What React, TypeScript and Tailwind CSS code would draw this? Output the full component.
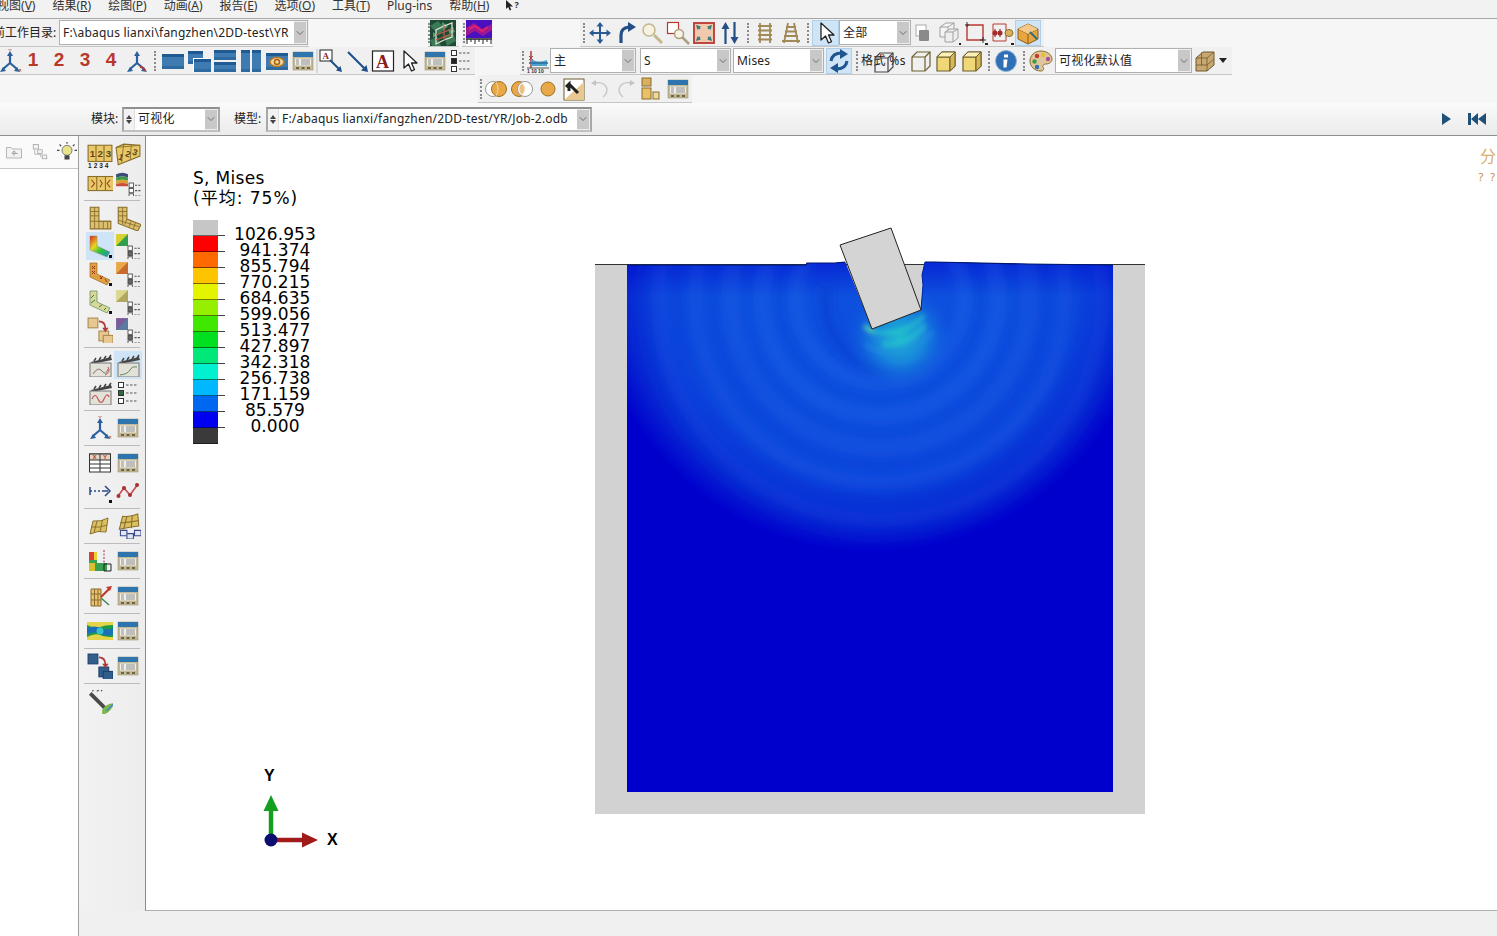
import type { ReactNode } from "react";
import { ChevronDown } from "lucide-react";

const ui = "font-['Noto_Sans','Noto_Sans_CJK_SC',sans-serif]";

function Ico({ children, size = 24 }: { children: ReactNode; size?: number }) {
  return (
    <svg className="shrink-0" width={size} height={size} viewBox="0 0 24 24" fill="none">
      {children}
    </svg>
  );
}

const Y = "#e8c868"; // yellow mesh fill
const YL = "#8a6d2a"; // yellow mesh line

/* ---------- top toolbar icons ---------- */
const TriadAxes = ({ small = false }: { small?: boolean }) => (
  <Ico>
    <path d="M12 5v9M12 14l-7 6M12 14l7 6" stroke="#2b5f9e" strokeWidth="2.200" />
    <path d="M12 2l-3 5h6zM2 23l6-1-3-4zM22 23l-6-1 3-4z" fill="#2b5f9e" />
    {!small && <path d="M10.500 0l1.500 1.500L13.500 0M21 20l2 2.500M23 20l-2 2.500" stroke="#b04a3a" strokeWidth=".8" />}
    {small && <path d="M15 18q4 0 5 4" stroke="#b03a3a" strokeWidth="1.800" />}
  </Ico>
);
const Win = ({ x, y, w, h }: { x: number; y: number; w: number; h: number }) => (
  <g>
    <rect x={x} y={y} width={w} height={h} fill="#3d7bb0" />
    <rect x={x} y={y} width={w} height={Math.min(3, h / 3)} fill="#1f5a92" />
    <rect x={x} y={y + h - 3} width={w} height={3} fill="#2c6aa0" />
  </g>
);
const OneWin = () => <Ico><Win x={1} y={5} w={22} h={15} /></Ico>;
const CascadeWin = () => (
  <Ico>
    <Win x={1} y={2} w={15} h={13} />
    <rect x={6} y={9} width={18} height={14} fill="#fff" />
    <Win x={7} y={10} w={17} h={13} />
  </Ico>
);
const RowsWin = () => <Ico><Win x={1} y={1} w={22} h={10} /><Win x={1} y={13} w={22} h={10} /></Ico>;
const ColsWin = () => <Ico><Win x={2} y={1} w={9} h={22} /><Win x={13} y={1} w={9} h={22} /></Ico>;
const LinkWin = () => (
  <Ico>
    <Win x={1} y={4} w={22} h={17} />
    <ellipse cx="12" cy="13" rx="7" ry="4.500" fill="#f0d8a0" stroke="#c07820" strokeWidth="1.500" />
    <circle cx="12" cy="13" r="2.500" stroke="#a86010" strokeWidth="1.500" />
  </Ico>
);
const Manager = () => (
  <Ico>
    <rect x="2" y="3" width="20" height="18" fill="#c4ba98" stroke="#8f8562" strokeWidth=".5" />
    <rect x="2" y="3" width="20" height="5" fill="#2e74ad" />
    <rect x="4" y="9.500" width="16" height="7" fill="#eeeeea" />
    <path d="M5 11h3M5 13h3M5 15h3M10 11h9M10 13h9M10 15h9" stroke="#8f8f8f" strokeWidth="1" />
    <path d="M5 18h3v2H5zM10.500 18h3v2h-3zM16 18h3v2h-3z" fill="#6e6545" />
  </Ico>
);
const NoteArrow = () => (
  <Ico>
    <rect x="1" y="1" width="12" height="11" fill="#fff" stroke="#222" />
    <text x="3.500" y="10" fontSize="9" fontWeight="700" fontFamily="Liberation Serif" fill="#8a1c1c">A</text>
    <path d="M11 11l9 9" stroke="#1f4f88" strokeWidth="2" />
    <path d="M23 23l-6-1.500 4.500-4.500z" fill="#1f4f88" />
  </Ico>
);
const Arrow = () => (
  <Ico>
    <path d="M3 3l16 16" stroke="#1f4f88" strokeWidth="2.200" />
    <path d="M23 23l-7-1.500 5.500-5.500z" fill="#1f4f88" />
  </Ico>
);
const AText = () => (
  <Ico>
    <rect x="1.500" y="2" width="21" height="20" fill="#fff" stroke="#222" strokeWidth="1.200" />
    <text x="5" y="19" fontSize="18" fontWeight="700" fontFamily="Liberation Serif" fill="#8a1c1c">A</text>
  </Ico>
);
const Cursor = () => (
  <Ico>
    <path d="M7 2v17l4.500-4 3 7 3-1.300-3-6.700H20z" fill="#fff" stroke="#222" strokeWidth="1.300" strokeLinejoin="round" />
  </Ico>
);
const CheckList = ({ swatch = "#222", small = false }: { swatch?: string; small?: boolean }) => (
  <Ico size={small ? 18 : 24}>
    {[4, 12, 20].map((y, i) => (
      <g key={y}>
        <rect x="2.500" y={y - 2.500} width="5" height="5" fill={i === 1 ? swatch : "#fff"} stroke="#333" />
        <path d={`M10 ${y}h12`} stroke="#555" strokeWidth="1.200" strokeDasharray="2.500 1.500" />
      </g>
    ))}
  </Ico>
);
const Mosaic = () => (
  <svg className="shrink-0" width="26" height="26" viewBox="0 0 26 26">
    <rect width="26" height="26" fill="#1c4a34" />
    <path d="M0 6l8-5 7 7-6 7zM14 16l9-4 3 9-9 5zM0 20l7-3 4 9H2z" fill="#3a7a54" />
    <path d="M12 2l6 4-5 5zM18 10l5-3 2 5-5 2zM3 12l4 3-4 3z" fill="#5a9a70" />
    <path d="M6 24V10l8-4 8-3v14l-8 3z" fill="none" stroke="#e4e0d8" strokeWidth="1.300" />
    <path d="M14 6v14M6 15l16-6M6 20l16-6" stroke="#c05a48" strokeWidth="1.200" />
  </svg>
);
const Plasma = () => (
  <svg className="shrink-0" width="26" height="26" viewBox="0 0 26 26">
    <rect width="26" height="18" fill="#4a10c0" />
    <path d="M0 8l8-5 8 6 10-5v6l-9 6-8-5-9 5z" fill="#a01890" />
    <path d="M3 9l6-3 7 5 6-4" stroke="#e02070" strokeWidth="2" fill="none" />
    <rect y="18" width="26" height="8" fill="#fff" />
    <path d="M0 19h26" stroke="#222" strokeWidth="1.500" />
    <path d="M1 19v5M5 19v3M9 19v5M13 19v3M17 19v5M21 19v3M25 19v5" stroke="#222" />
  </svg>
);
const Pan = () => (
  <Ico>
    <path d="M12 4v16M4 12h16" stroke="#2a5a94" strokeWidth="2" />
    <path d="M12 1l-3.500 4.500h7zM12 23l-3.500-4.500h7zM1 12l4.500-3.500v7zM23 12l-4.500-3.500v7z" fill="#2a5a94" />
  </Ico>
);
const Rotate = () => (
  <Ico>
    <path d="M7 22V14q0-7 8-8" stroke="#234f86" strokeWidth="3.200" />
    <path d="M22 6l-8-5v10z" fill="#234f86" />
  </Ico>
);
const Magnify = () => (
  <Ico>
    <circle cx="9" cy="9" r="6" fill="#f7f2e2" stroke="#c4b88e" strokeWidth="1.600" />
    <path d="M14 14l8 8" stroke="#c4b88e" strokeWidth="3" />
  </Ico>
);
const BoxZoom = () => (
  <Ico>
    <rect x="1.500" y="1.500" width="11" height="11" fill="#fff" stroke="#b8382e" strokeWidth="1.200" />
    <circle cx="13" cy="13" r="4.500" fill="#f7f2e2" stroke="#a9a080" strokeWidth="1.500" />
    <path d="M16 16l7 7" stroke="#a9a080" strokeWidth="2.500" />
  </Ico>
);
const AutoFit = () => (
  <Ico>
    <rect x="2" y="2" width="20" height="20" fill="#f1c9b0" stroke="#b8382e" strokeWidth="1.800" />
    <path d="M4 4l5 1.500L5.500 9zM20 4l-5 1.500L18.500 9zM4 20l5-1.500L5.500 15zM20 20l-5-1.500 3.500-3.500z" fill="#3c7f78" />
    <path d="M5 5l3 3M19 5l-3 3M5 19l3-3M19 19l-3-3" stroke="#3c7f78" strokeWidth="1.500" />
  </Ico>
);
const UpDown = () => (
  <Ico>
    <path d="M7.500 7v16M16.500 1v16" stroke="#234f86" strokeWidth="2.200" />
    <path d="M7.500 1l-4 7h8zM16.500 23l-4-7h8z" fill="#234f86" />
  </Ico>
);
const Ladder = () => (
  <Ico>
    <path d="M7 2v20M17 2v20" stroke="#a08a58" strokeWidth="1.800" />
    <path d="M5 5h14M5 9.500h14M5 14h14M5 18.500h14" stroke="#a08a58" strokeWidth="2" />
  </Ico>
);
const Track = () => (
  <Ico>
    <path d="M9 2L5 22M15 2l4 20" stroke="#a08a58" strokeWidth="1.800" />
    <path d="M7 6h10M6 10.500h12M5 15h14M3 20h18" stroke="#a08a58" strokeWidth="2" />
  </Ico>
);
const GreyStack = () => (
  <Ico>
    <rect x="5" y="4" width="10" height="11" fill="#fff" stroke="#aaa" />
    <rect x="8" y="9" width="10" height="11" rx="1" fill="#8a8a8a" />
  </Ico>
);
const GreyCubes = () => (
  <Ico>
    <path d="M3 6l6-4h8v10l-6 4H3z" fill="#f4f4f4" stroke="#a0a0a0" />
    <path d="M3 6h8v10M11 6l6-4" stroke="#a0a0a0" />
    <path d="M8 11l5-3h8v9l-5 4H8z" fill="#eee" stroke="#a0a0a0" />
    <path d="M8 11h8v10M16 11l5-3" stroke="#a0a0a0" />
    <path d="M22 22h2v2h-2z" fill="#222" />
  </Ico>
);
const RedBox = () => (
  <Ico>
    <path d="M3 4h16v15H3z" stroke="#b8382e" strokeWidth="1.400" />
    <path d="M3 1v5M1 4h4M19 16v6M16 19h6" stroke="#333" strokeWidth="1" />
    <path d="M21 22h3v2h-3z" fill="#222" />
  </Ico>
);
const RedDots = () => (
  <Ico>
    <path d="M3 3h13v17H3z" stroke="#b8382e" strokeWidth="1" />
    <path d="M5 8v8M10 8v8" stroke="#7a1f1f" strokeWidth="1" />
    <circle cx="5" cy="12" r="2.500" fill="#a52a2a" />
    <circle cx="10" cy="12" r="2.500" fill="#a52a2a" />
    <ellipse cx="19" cy="12" rx="4" ry="3.500" fill="#d8b060" stroke="#8a6d2a" />
    <path d="M21 22h3v2h-3z" fill="#222" />
  </Ico>
);
const OrangeCube = () => (
  <Ico>
    <path d="M2 8l10-5 10 5v10l-10 5-10-5z" fill="#e8a63e" stroke="#8a5a20" />
    <path d="M2 8l10 5 10-5M12 13v10" stroke="#8a5a20" />
    <path d="M2 8l10-5 10 5-10 5z" fill="#f2c98a" />
    <path d="M14 11l7 7" stroke="#2f6f7a" strokeWidth="2" />
  </Ico>
);
const PathChart = () => (
  <Ico>
    <path d="M5 2v17" stroke="#a53a3a" strokeWidth="1.500" />
    <path d="M3 7l4 4M3 11l4-4" stroke="#a53a3a" />
    <path d="M5 9q5 6 16 2v6H5z" fill="#4ea3c9" />
    <path d="M3 14h19" stroke="#2f6fa0" strokeWidth="1.600" />
    <path d="M1 19h22" stroke="#555" strokeWidth="1" />
    <text x="1" y="24" fontSize="5" fontWeight="700" fill="#333" fontFamily="Liberation Sans">1 10 10</text>
  </Ico>
);
const Sync = () => (
  <Ico>
    <path d="M4 12q1-8 11-8" stroke="#1f5690" strokeWidth="3" />
    <path d="M21 5l-8-5v10z" fill="#1f5690" />
    <path d="M20 12q-1 8-11 8" stroke="#1f5690" strokeWidth="3" />
    <path d="M3 19l8 5V14z" fill="#1f5690" />
  </Ico>
);
const WireCube = ({ fill = "none", stroke = "#6d5f30" }: { fill?: string; stroke?: string }) => (
  <Ico>
    <path d="M3 8l5-5h13v14l-5 5H3z" fill={fill} stroke={stroke} strokeWidth="1.200" />
    <path d="M3 8h13v14M16 8l5-5" stroke={stroke} strokeWidth="1.200" />
    {fill !== "none" && <path d="M3 8l5-5h13l-5 5z" fill="#fbf0b8" stroke={stroke} />}
    {fill !== "none" && <path d="M16 8l5-5v14l-5 5z" fill="#d8b850" stroke={stroke} />}
  </Ico>
);
const Info = () => (
  <Ico>
    <circle cx="12" cy="12" r="10.500" fill="#2f6fb5" stroke="#8db0d8" />
    <path d="M10 5.500h4v3h-4zM9.500 10.500h4l-1 8h-3z" fill="#fff" />
  </Ico>
);
const Palette = () => (
  <Ico>
    <path d="M12 2C5 2 1 7 1 12s4 10 11 10c3 0 3-3 2-4s1-3 3-3 6-1 6-5-5-8-11-8z" fill="#dfc69a" stroke="#8a6d2a" />
    <circle cx="8" cy="7" r="2.200" fill="#c83a2a" />
    <circle cx="14" cy="6" r="2.200" fill="#e8c030" />
    <circle cx="5.500" cy="12.500" r="2.200" fill="#3f9a46" />
    <circle cx="8" cy="18" r="2.200" fill="#2f6fb5" />
    <circle cx="19" cy="10" r="2.200" fill="#b04a9a" />
  </Ico>
);
const TanCube = () => (
  <Ico>
    <path d="M3 9l7-6h11v13l-7 6H3z" fill="#c8a870" stroke="#6d5a30" />
    <path d="M3 9h11v13M14 9l7-6M8.500 3.500v13M3 16h11l7-6" stroke="#6d5a30" strokeWidth=".8" />
  </Ico>
);
const VennL = () => (
  <Ico>
    <circle cx="9" cy="12" r="7.500" fill="#fff" stroke="#999" />
    <circle cx="15" cy="12" r="7.500" fill="#e8a848" stroke="#a07020" />
    <path d="M12 5q4 7 0 14" stroke="#fff" strokeWidth=".5" />
  </Ico>
);
const VennR = () => (
  <Ico>
    <circle cx="9" cy="12" r="7.500" fill="#e8a848" stroke="#a07020" />
    <circle cx="15" cy="12" r="7.500" fill="#fff" stroke="#999" />
    <path d="M12 6.200a7.500 7.500 0 0 1 0 11.600a7.500 7.500 0 0 1 0-11.600z" fill="#f0c080" />
  </Ico>
);
const Ball = () => (
  <Ico>
    <circle cx="12" cy="12" r="7" fill="#e8a848" stroke="#a07020" />
  </Ico>
);
const Wedge = () => (
  <Ico>
    <rect x="2" y="2" width="20" height="21" fill="#fff" stroke="#6d5a30" />
    <path d="M2 23L22 5v18z" fill="#e8c890" />
    <path d="M7 14V7l-3 3M7 7l9 9" stroke="#222" strokeWidth="3" />
  </Ico>
);
const Undo = ({ flip = false }: { flip?: boolean }) => (
  <Ico>
    <g transform={flip ? "translate(24 0) scale(-1 1)" : undefined}>
      <path d="M6 6q11-2 13 6q0 5-4 8" stroke="#c4c4c4" strokeWidth="1.300" />
      <path d="M3 6l5-3v6z" fill="#c4c4c4" />
    </g>
  </Ico>
);
const Blocks = () => (
  <Ico>
    <rect x="2" y="1" width="9" height="8" fill="#d8b060" stroke="#8a6d2a" />
    <rect x="2" y="11" width="9" height="11" fill="#e8c068" stroke="#8a6d2a" />
    <rect x="13" y="15" width="6" height="7" fill="#f0d8a0" stroke="#8a6d2a" />
  </Ico>
);

/* ---------- toolbox icons ---------- */
const NumGrid = () => (
  <Ico size={26}>
    <rect x="1" y="3" width="22" height="15" fill={Y} stroke={YL} />
    <path d="M8.300 3v15M15.700 3v15" stroke={YL} />
    <g fontFamily="Liberation Sans" fontSize="9" fontWeight="700" fill="#5a4718">
      <text x="2.500" y="14">1</text><text x="9.800" y="14">2</text><text x="17.200" y="14">3</text>
    </g>
    <text x="1" y="24" fontFamily="Liberation Sans" fontSize="6" fontWeight="700" fill="#222" letterSpacing="1.800">1234</text>
  </Ico>
);
const NumGridTilt = () => (
  <Ico size={26}>
    <path d="M1 5l7-3 15 1v10l-20 8z" fill={Y} stroke={YL} />
    <path d="M1 5l22-2M8 2l-2 17M15 3l-1 14" stroke={YL} strokeWidth=".8" />
    <g fontFamily="Liberation Sans" fontSize="8" fontWeight="700" fill="#5a4718">
      <text x="3" y="17" transform="rotate(20 6 15)">1</text>
      <text x="9.500" y="14" transform="rotate(20 12 12)">2</text>
      <text x="16" y="12" transform="rotate(20 18 10)">3</text>
    </g>
  </Ico>
);
const Slices = () => (
  <Ico size={26}>
    <rect x="1" y="6" width="24" height="13" fill={Y} stroke={YL} />
    <path d="M9 6v13M17 6v13" stroke={YL} />
    <path d="M4 9l3 3.500L4 16M21.500 9l-3 3.500 3 3.500M12 9l2 3.500-2 3.500" stroke="#9a4a1a" strokeWidth="1" />
  </Ico>
);
const LayerList = () => (
  <Ico size={26}>
    <path d="M1 4q6-3 11 0v3q-5-2-11 0z" fill="#3c4a78" />
    <path d="M1 7q6-2 11 0v3q-5-2-11 0z" fill="#3f9a46" />
    <path d="M1 10q6-2 11 0v3q-5-2-11 0z" fill="#d8a030" />
    <path d="M1 13q6-2 11 0v2H1z" fill="#c8503a" />
    {[14, 19, 24].map((y) => (
      <g key={y}>
        <rect x="13" y={y - 2} width="4" height="4" fill="#fff" stroke="#444" strokeWidth=".8" />
        <path d={`M18.500 ${y}h7`} stroke="#555" strokeDasharray="2 1" />
      </g>
    ))}
  </Ico>
);
const LShape = "M3 2h8v13h11v7H3z";
const LGrid = () => (
  <Ico size={26}>
    <path d={LShape} fill="#dcc070" stroke={YL} />
    <path d="M7 2v20M3 6h8M3 10h8M3 15h19M11 15v7M15 15v7M19 15v7" stroke={YL} strokeWidth=".8" />
  </Ico>
);
const LGridTilt = () => (
  <Ico size={26}>
    <path d="M3 2h8v11l13 5-3 6L3 17z" fill="#dcc070" stroke={YL} />
    <path d="M7 2v16M3 6h8M3 10h8M3 14l19 6M11 13l-2 5M15 15l-2 5M19 16l-2 6" stroke={YL} strokeWidth=".8" />
  </Ico>
);
const LContour = () => (
  <svg className="shrink-0" width="24" height="24" viewBox="0 0 24 24">
    <defs>
      <linearGradient id="lc" x1="0" y1="0" x2="1" y2="1">
        <stop offset="0" stopColor="#e02020" />
        <stop offset=".35" stopColor="#e8d820" />
        <stop offset=".6" stopColor="#30c040" />
        <stop offset="1" stopColor="#1890c8" />
      </linearGradient>
    </defs>
    <path d="M2 2h7v10l13 6-3 5L2 16z" fill="url(#lc)" stroke="#887" strokeWidth=".5" />
    <path d="M21 21h3v3h-3z" fill="#111" />
  </svg>
);
const Swatch = ({ a, b }: { a: string; b: string }) => (
  <Ico size={26}>
    <rect x="1" y="1" width="11" height="11" fill={a} />
    <path d="M12 1v11H1z" fill={b} />
    {[14, 19, 24].map((y, i) => (
      <g key={y}>
        <rect x="12" y={y - 2} width="4" height="4" fill={i === 1 ? "#666" : "#fff"} stroke="#444" strokeWidth=".8" />
        <path d={`M18 ${y}h7`} stroke="#555" strokeDasharray="2 1" />
      </g>
    ))}
  </Ico>
);
const LSymbols = () => (
  <svg className="shrink-0" width="24" height="24" viewBox="0 0 24 24">
    <path d="M2 1h7v11l13 6-3 5L2 15z" fill="#e0a040" stroke="#8a5a20" strokeWidth=".6" />
    <path d="M4 4l3 3M7 4L4 7M4 9l3 3M7 9l-3 3M12 14l2 3M15 14l-3 3M17 17l2 3" stroke="#9a3a1a" />
    <path d="M21 21h3v3h-3z" fill="#111" />
  </svg>
);
const LMaterial = () => (
  <svg className="shrink-0" width="24" height="24" viewBox="0 0 24 24">
    <path d="M2 1h7v11l13 6-3 5L2 15z" fill="#d8d898" stroke="#5a8a5a" strokeWidth=".7" />
    <path d="M3 8l3-3M3 13l4-3M11 17l3-2M16 20l2-2" stroke="#3a7a4a" />
    <path d="M21 21h3v3h-3z" fill="#111" />
  </svg>
);
const CopyShape = ({ tone = "#e8c890", line = "#a88a50", arrow = "#b03a3a" }) => (
  <Ico size={26}>
    <rect x="1" y="1" width="9" height="9" fill={tone} stroke={line} />
    <rect x="11" y="13" width="9" height="9" fill={tone} stroke={line} />
    <rect x="15" y="17" width="9" height="8" fill={tone} stroke={line} />
    <path d="M11 4q6 0 6 7" stroke={arrow} strokeWidth="1.600" />
    <path d="M17 14l-3-4h6z" fill={arrow} />
  </Ico>
);
const Film = ({ children }: { children: ReactNode }) => (
  <Ico size={24}>
    <path d="M3 9l20-5 1 3-20 4z" fill="#444" />
    <path d="M6 8l2-3M11 7l2-3M16 6l2-3M21 5l2-3" stroke="#444" strokeWidth="1.500" />
    <rect x="2" y="10" width="21" height="14" fill="#e4e1d8" stroke="#777" />
    {children}
  </Ico>
);
const XY = () => (
  <Ico>
    <rect x="1.500" y="3" width="21" height="18" fill="#fff" stroke="#333" />
    <rect x="1.500" y="3" width="21" height="6" fill="#e4d4c0" stroke="#333" />
    <path d="M12 3v18M1.500 13h21M1.500 17h21" stroke="#333" />
    <g fontSize="6" fontWeight="700" fontFamily="Liberation Sans" fill="#b03a3a">
      <text x="4.500" y="8.200">X</text><text x="15" y="8.200">Y</text>
    </g>
  </Ico>
);
const DashArrow = () => (
  <Ico>
    <path d="M2 8v8" stroke="#2f4a88" strokeWidth="1.500" />
    <path d="M2 12h2M6 12h2M10 12h2M14 12h6" stroke="#2f4a88" strokeWidth="1.500" />
    <path d="M17 7l5 5-5 5" stroke="#2f4a88" strokeWidth="1.500" />
    <path d="M21 21h3v3h-3z" fill="#111" />
  </Ico>
);
const RedLine = () => (
  <Ico>
    <path d="M2 17l6-8 6 7 8-11" stroke="#c84a4a" strokeWidth="1.600" />
    <g fill="#a83030"><circle cx="2.500" cy="17" r="2" /><circle cx="8" cy="9" r="2" /><circle cx="14" cy="16" r="2" /><circle cx="21" cy="6" r="2" /></g>
  </Ico>
);
const Wavy = () => (
  <Ico>
    <path d="M5 7q8 1 15-3l-2 14q-8-2-16 2z" fill="#dcc060" stroke="#8a7030" />
    <path d="M9 7l-3 12M14.500 6l-2.500 12M4 13q8 1 15-2" stroke="#8a7030" />
  </Ico>
);
const WavyStack = () => (
  <Ico size={26}>
    <path d="M7 3q7 1 14-2l1 11q-8 1-18 3z" fill="#dcc060" stroke="#8a7030" />
    <path d="M11 3l-3 12M16 2l-1 12M5 9q8 0 17-2" stroke="#8a7030" />
    <path d="M5 16h6v5H5zM11 19h6v5h-6zM18 16h6v5h-6z" fill="#dfe6f5" stroke="#3a4a88" />
  </Ico>
);
const CutPlot = () => (
  <Ico>
    <path d="M1 3h8v11h10v8H1z" fill="#38a050" />
    <path d="M1 3h5v8H1z" fill="#d84030" />
    <path d="M6 3h3v8H6z" fill="#e8d030" />
    <path d="M1 14h6v8H1z" fill="#d8c030" />
    <path d="M16 1v14" stroke="#a03050" strokeDasharray="2 1.500" />
    <path d="M16 15h7v7h-7z" stroke="#222" />
  </Ico>
);
const GridFan = () => (
  <Ico>
    <path d="M3 5h10v17H3z" fill="#e8c070" stroke="#8a6d2a" />
    <path d="M6.500 5v17M10 5v17M3 10h10M3 16h10" stroke="#8a6d2a" />
    <path d="M13 13L22 4" stroke="#c0382e" strokeWidth="2.200" />
    <path d="M13 14l8 7" stroke="#3a8a58" strokeWidth="1.500" />
    <path d="M24 2l-6 1 4 4z" fill="#c0382e" />
  </Ico>
);
const Stream = () => (
  <svg className="shrink-0" width="26" height="24" viewBox="0 0 26 24">
    <rect y="3" width="26" height="18" fill="#1c9a48" />
    <path d="M0 3h26v3q-8 0-13 2T0 6z" fill="#e4d44a" />
    <path d="M0 21h26v-3q-8 0-13-2T0 18z" fill="#e4d44a" />
    <path d="M0 9q7-3 14 0t12 0v6q-6 3-12 0T0 15z" fill="#1a70b8" />
    <circle cx="13" cy="12" r="3.500" fill="#38c0c8" />
  </svg>
);
const Brush = () => (
  <Ico size={26}>
    <path d="M3 5l15 15" stroke="#4a4a4a" strokeWidth="3.400" />
    <path d="M5 3l1-1M9 3l2-1M13 3l1-1" stroke="#555" />
    <path d="M14 20q4-6 10-6 1 3-3 7t-7 3z" fill="#7fb84a" />
    <path d="M18 21l6-6" stroke="#4a8ac8" strokeWidth="1.500" />
  </Ico>
);
const Folder = () => (
  <Ico size={18}>
    <path d="M2 6h6l2 2h12v12H2z" fill="#f2f2f2" stroke="#a0a0a0" />
    <path d="M12 11v6M9 14h8M12 10.500l-2.500 2.500M12 10.500l2.500 2.500" stroke="#909090" />
  </Ico>
);
const Tree = () => (
  <Ico size={18}>
    <rect x="3" y="2" width="7" height="6" fill="#f2f2f2" stroke="#a0a0a0" />
    <rect x="9" y="9" width="6" height="5" fill="#f2f2f2" stroke="#a0a0a0" />
    <rect x="15" y="16" width="6" height="5" fill="#f2f2f2" stroke="#a0a0a0" />
    <path d="M5 9v6h8M13 15v4" stroke="#a0a0a0" />
  </Ico>
);
const Bulb = () => (
  <Ico size={20}>
    <circle cx="12" cy="10" r="6" fill="#e8e48a" stroke="#666" />
    <rect x="9" y="16" width="6" height="5" fill="#444" />
    <path d="M12 0v2M3 3l2 2M21 3l-2 2M0 10h3M21 10h3" stroke="#444" strokeWidth="1.400" />
  </Ico>
);

/* ---------- shared bits ---------- */
function Slot({ children, active, className = "w-[26px]" }: { children: ReactNode; active?: boolean; className?: string }) {
  return (
    <div className={`flex h-[26px] shrink-0 items-center justify-center ${className} ${active ? "bg-[#cfe4f6] outline outline-[#b0d0ea] -outline-offset-1" : ""}`}>
      {children}
    </div>
  );
}

function Grip({ className = "w-[9px]" }: { className?: string }) {
  return (
    <div className={`flex shrink-0 justify-center ${className}`}>
      <div className="h-[20px] border-l-2 border-dotted border-[#8a8a8a]" />
    </div>
  );
}

function Combo({ text, className, spin }: { text: string; className: string; spin?: boolean }) {
  return (
    <div className={`flex h-[25px] shrink-0 items-center bg-white ${spin ? "border-2 border-b-[#c0c0c0] border-l-[#a8a8a8] border-r-[#a8a8a8] border-t-[#8f8f8f]" : "border border-[#b0b0b0]"} ${className}`}>
      {spin && (
        <div className="flex w-[11px] shrink-0 flex-col items-center justify-center gap-[1px] self-stretch border-r border-[#ddd] bg-[#f2f2f2]">
          <div className="h-0 w-0 border-x-[3px] border-b-[4px] border-x-transparent border-b-[#444]" />
          <div className="h-0 w-0 border-x-[3px] border-t-[4px] border-x-transparent border-t-[#444]" />
        </div>
      )}
      <span className={`min-w-0 flex-1 truncate pl-[3px] text-[12px] tracking-[0.2px] text-[#222] ${ui}`}>{text}</span>
      <div className="flex w-[13px] shrink-0 items-center justify-center self-stretch border-y border-r border-[#eee] bg-[#c8c8c8]">
        <ChevronDown size={12} strokeWidth={1.200} color="#333" />
      </div>
    </div>
  );
}

function Bar({ className, children }: { className: string; children: ReactNode }) {
  return <div className={`flex h-full shrink-0 items-center border-b border-[#c6c6c6] bg-[#f0f0f0] ${className}`}>{children}</div>;
}

function Menu({ label, mark }: { label: string; mark: string }) {
  return (
    <span className="whitespace-nowrap">
      {label}(<span className="underline">{mark}</span>)
    </span>
  );
}

/* ---------- toolbox ---------- */
const Orange = <Swatch a="#e8a848" b="#c86a30" />;
const toolGroups: { a: ReactNode; b?: ReactNode; activeA?: boolean; activeB?: boolean }[][] = [
  [{ a: <NumGrid />, b: <NumGridTilt /> }, { a: <Slices />, b: <LayerList /> }],
  [
    { a: <LGrid />, b: <LGridTilt /> },
    { a: <LContour />, b: <Swatch a="#d8d030" b="#30a050" />, activeA: true },
    { a: <LSymbols />, b: Orange },
    { a: <LMaterial />, b: <Swatch a="#dcd890" b="#b0a860" /> },
    { a: <CopyShape />, b: <Swatch a="#7a5a9a" b="#5a7aa0" /> },
  ],
  [
    { a: <Film><path d="M5 21q5-8 9-3t6-2" stroke="#777" /><path d="M20 14q3 5-3 8" stroke="#b84a4a" /></Film>, b: <Film><path d="M4 22q8-1 10-5t7-3" stroke="#5a8a5a" /></Film>, activeB: true },
    { a: <Film><path d="M4 18q3-7 6 0t6 0 5-2" stroke="#c05a5a" strokeWidth="1.200" /></Film>, b: <CheckList swatch="#2f6a3a" /> },
  ],
  [{ a: <TriadAxes small={false} />, b: <Manager /> }],
  [{ a: <XY />, b: <Manager /> }, { a: <DashArrow />, b: <RedLine /> }],
  [{ a: <Wavy />, b: <WavyStack /> }],
  [{ a: <CutPlot />, b: <Manager /> }],
  [{ a: <GridFan />, b: <Manager /> }],
  [{ a: <Stream />, b: <Manager /> }],
  [{ a: <CopyShape tone="#2f5f8a" line="#1f3f6a" arrow="#b03a3a" />, b: <Manager /> }],
  [{ a: <Brush /> }],
];

function Toolbox() {
  return (
    <div className="flex w-[66px] shrink-0 flex-col bg-gradient-to-r from-[#f2f2f2] to-[#ededed] pt-[5px]">
      {toolGroups.map((rows, g) => (
        <div key={g}>
          {g > 0 && <div className="mx-[5px] my-[3px] h-px bg-[#bcbcbc]" />}
          {rows.map((r, i) => (
            <div key={i} className="flex h-[28px] pl-[7px]">
              <div className={`flex h-[28px] w-[28px] items-center justify-center ${r.activeA ? "bg-[#cfe4f6]" : ""}`}>{r.a}</div>
              <div className={`flex h-[28px] w-[28px] items-center justify-center ${r.activeB ? "bg-[#cfe4f6]" : ""}`}>{r.b}</div>
            </div>
          ))}
        </div>
      ))}
    </div>
  );
}

/* ---------- viewport ---------- */
const legendColors = ["#c6c6c6", "#ff0000", "#ff6a00", "#ffc400", "#e4f400", "#96ee00", "#40e800", "#00e020", "#00e878", "#00f0d0", "#00b8ff", "#0068f0", "#0000f0", "#3a3a3a"];
const legendValues = ["1026.953", "941.374", "855.794", "770.215", "684.635", "599.056", "513.477", "427.897", "342.318", "256.738", "171.159", "85.579", "0.000"];

function Legend() {
  return (
    <div className="absolute left-[47px] top-[32px] text-black">
      <div className="font-['DejaVu_Sans','Noto_Sans_CJK_SC',sans-serif] text-[17px] leading-[20px]">
        <div className="tracking-[0.3px]">S, Mises</div>
        <div className="tracking-[1px]">(平均: 75%)</div>
      </div>
      <div className="mt-[12px] flex">
        <div className="flex flex-col">
          {legendColors.map((c, i) => (
            <div key={i} className="flex h-4">
              <div className="w-[25px] border-b border-black/50" style={{ backgroundColor: c }} />
              {i < 13 && <div className="w-[7px] border-b border-[#444]" />}
            </div>
          ))}
        </div>
        <div className="ml-[9px] mt-[6px] w-[82px] text-center font-['DejaVu_Sans',sans-serif] text-[17px] leading-[16px] tracking-[0.1px]">
          {legendValues.map((v) => (
            <div key={v}>{v}</div>
          ))}
        </div>
      </div>
    </div>
  );
}

function ContourPlot() {
  const surface = "M627 265L806 265L807 263L835 263L845 262L872 329L921 310L923 285L922 275L925 262L933 262L1028 264L1113 265L1113 792L627 792Z";
  const rings = [84, 118, 150, 185, 222];
  return (
    <svg className="absolute left-[444px] top-[84px]" width="560" height="600" viewBox="590 220 560 600">
      <defs>
        <clipPath id="body"><path d={surface} /></clipPath>
        <radialGradient id="halo" gradientUnits="userSpaceOnUse" cx="872" cy="270" r="282">
          <stop offset="0" stopColor="#0d50de" />
          <stop offset=".5" stopColor="#0d4ede" />
          <stop offset=".74" stopColor="#0c44dc" />
          <stop offset=".89" stopColor="#0626d2" />
          <stop offset="1" stopColor="#0000cd" />
        </radialGradient>
        <radialGradient id="hot" gradientUnits="userSpaceOnUse" cx="900" cy="338" r="56">
          <stop offset="0" stopColor="#1eb8d0" />
          <stop offset=".45" stopColor="#1884dc" />
          <stop offset="1" stopColor="#0d50de" stopOpacity="0" />
        </radialGradient>
        <linearGradient id="fadeTop" x1="0" y1="0" x2="0" y2="1">
          <stop offset="0" stopColor="#0000cd" stopOpacity=".5" />
          <stop offset="1" stopColor="#0000cd" stopOpacity="0" />
        </linearGradient>
        <filter id="b6" x="-30%" y="-30%" width="160%" height="160%"><feGaussianBlur stdDeviation="6" /></filter>
        <filter id="b3" x="-30%" y="-30%" width="160%" height="160%"><feGaussianBlur stdDeviation="2.600" /></filter>
      </defs>
      <rect x="595" y="265" width="550" height="549" fill="#d2d2d2" />
      <path d="M595 264.500H1145" stroke="#333" strokeWidth="1" />
      <path d={surface} fill="#0000cd" />
      <g clipPath="url(#body)">
        <rect x="627" y="262" width="486" height="330" fill="url(#halo)" />
        <rect x="627" y="262" width="486" height="34" fill="url(#fadeTop)" />
        <g filter="url(#b6)" fill="none">
          {rings.map((r, i) => (
            <circle key={r} cx="880" cy="298" r={r} stroke="#2f78ee" strokeOpacity={0.3 - i * 0.04} strokeWidth={10 + i} />
          ))}
          {rings.map((r) => (
            <circle key={r} cx="880" cy="298" r={r + 16} stroke="#0434cc" strokeOpacity=".2" strokeWidth="7" />
          ))}
        </g>
        <path d="M826 285Q820 335 858 362Q890 380 925 360" stroke="#0234c8" strokeWidth="7" strokeOpacity=".6" fill="none" filter="url(#b6)" />
        <rect x="840" y="285" width="120" height="115" fill="url(#hot)" />
        <g filter="url(#b3)" fill="none" strokeLinecap="round">
          <path d="M867 329q16 6 30 3t26-16" stroke="#2ad0c8" strokeWidth="4" strokeOpacity=".7" />
          <path d="M884 344q22 2 40-18" stroke="#26c4d0" strokeWidth="4.500" strokeOpacity=".75" />
          <path d="M866 345q28 20 66-12" stroke="#2090e0" strokeWidth="4" strokeOpacity=".55" />
          <path d="M865 326l7 6" stroke="#60e0a0" strokeWidth="3" />
        </g>
      </g>
      <path d="M627 265L806 265L807 263L835 263L845 262M925 262L933 262L1028 264L1113 265" stroke="#00186a" strokeWidth="1.200" fill="none" />
      <path d="M921 310L923 285L922 275L925 262" stroke="#0028a0" strokeWidth="1" fill="none" />
      <path d="M840 245L891 228L921 310L872 329Z" fill="#d4d4d4" stroke="#222" strokeWidth="1" />
    </svg>
  );
}

function AxisTriad() {
  return (
    <svg className="absolute left-[110px] top-[625px]" width="90" height="90" viewBox="0 0 90 90">
      <path d="M15 76V48" stroke="#14a01e" strokeWidth="4.500" />
      <path d="M15 34l-7.500 16h15z" fill="#14a01e" />
      <path d="M18 79h30" stroke="#a01c1c" strokeWidth="4.500" />
      <path d="M62 79L46 71.500v15z" fill="#a01c1c" />
      <circle cx="15" cy="79" r="6.500" fill="#0e0e70" />
      <g fontFamily="Liberation Sans, sans-serif" fontSize="16" fontWeight="700" fill="#000">
        <text x="8" y="20">Y</text>
        <text x="71" y="84">X</text>
      </g>
    </svg>
  );
}

export default function App() {
  return (
    <div className={`flex h-[936px] w-[1497px] flex-col overflow-hidden bg-[#f6f6f6] text-[12px] text-[#222] ${ui}`}>
      {/* menu */}
      <div className="flex h-[19px] shrink-0 items-start overflow-hidden border-b border-[#a8a8a8] bg-[#f2f2f2] leading-[12px] text-[#333]">
        <div className="-ml-[3px] flex items-start gap-[17px]">
          <Menu label="视图" mark="V" />
          <Menu label="结果" mark="R" />
          <Menu label="绘图" mark="P" />
          <Menu label="动画" mark="A" />
          <Menu label="报告" mark="E" />
          <Menu label="选项" mark="O" />
          <Menu label="工具" mark="T" />
          <span>Plug-ins</span>
          <Menu label="帮助" mark="H" />
          <div className="flex items-start">
            <svg width="8" height="11" viewBox="0 0 8 11"><path d="M0 0v9l2.200-2 1.500 3.500 1.600-.7L3.800 6.500H7z" fill="#222" /></svg>
            <span className="text-[9px] font-bold leading-[9px]">?</span>
          </div>
        </div>
      </div>

      {/* row 1 */}
      <div className="flex h-[28px] shrink-0">
        <Bar className="w-[309px]">
          <span className="-ml-[19px] w-[75px] shrink-0 whitespace-nowrap">当前工作目录:</span>
          <Combo text="F:\abaqus lianxi\fangzhen\2DD-test\YR" className="ml-[3px] w-[249px]" />
        </Bar>
        <Bar className="ml-[119px] w-[31px]">
          <Grip className="w-[2px]" />
          <Mosaic />
        </Bar>
        <Bar className="ml-[3px] w-[31px]">
          <Grip className="w-[4px]" />
          <Plasma />
        </Bar>
        <Bar className="ml-[87px] w-[464px]">
          <Grip className="w-[7px]" />
          <Slot><Pan /></Slot>
          <Slot><Rotate /></Slot>
          <Slot><Magnify /></Slot>
          <Slot><BoxZoom /></Slot>
          <Slot><AutoFit /></Slot>
          <Slot><UpDown /></Slot>
          <Grip />
          <Slot><Ladder /></Slot>
          <Slot><Track /></Slot>
          <Grip className="w-[8px]" />
          <Slot active className="w-[27px]"><Cursor /></Slot>
          <Combo text="全部" className="w-[72px]" />
          <Slot className="w-[24px]"><GreyStack /></Slot>
          <Slot className="w-[28px]"><GreyCubes /></Slot>
          <Slot><RedBox /></Slot>
          <Slot><RedDots /></Slot>
          <Slot active><OrangeCube /></Slot>
        </Bar>
      </div>

      {/* row 2 */}
      <div className="flex h-[28px] shrink-0">
        <Bar className="w-[475px]">
          <Slot className="w-[20px]"><TriadAxes /></Slot>
          {["1", "2", "3", "4"].map((n) => (
            <Slot key={n}>
              <span className="font-['Liberation_Sans',sans-serif] text-[19px] font-bold text-[#b8392c]">{n}</span>
            </Slot>
          ))}
          <Slot><TriadAxes small /></Slot>
          <Grip className="w-[10px]" />
          <Slot><OneWin /></Slot>
          <Slot><CascadeWin /></Slot>
          <Slot><RowsWin /></Slot>
          <Slot><ColsWin /></Slot>
          <Slot><LinkWin /></Slot>
          <Slot><Manager /></Slot>
          <div className="h-[24px] w-[2px] bg-[#d8d8d8]" />
          <Slot><NoteArrow /></Slot>
          <Slot><Arrow /></Slot>
          <Slot><AText /></Slot>
          <Slot><Cursor /></Slot>
          <Slot><Manager /></Slot>
          <Slot><CheckList /></Slot>
        </Bar>
        <Bar className="ml-[45px] w-[712px]">
          <Grip className="w-[6px]" />
          <Slot className="w-[24px]"><PathChart /></Slot>
          <Combo text="主" className="w-[86px]" />
          <Combo text="S" className="ml-[4px] w-[91px]" />
          <Combo text="Mises" className="ml-[2px] w-[91px]" />
          <Slot active className="ml-[2px] w-[26px]"><Sync /></Slot>
          <Grip className="w-[9px]" />
          <div className="relative flex w-[47px] shrink-0 items-center">
            <span className="whitespace-nowrap tracking-[0.4px]">格式 %s</span>
            <span className="absolute left-[11px] top-[-2px]"><WireCube stroke="#444" /></span>
          </div>
          <Slot className="w-[25px]"><WireCube /></Slot>
          <Slot><WireCube fill="#f0d878" /></Slot>
          <Slot><WireCube fill="#f0d878" /></Slot>
          <Grip className="w-[8px]" />
          <Slot><Info /></Slot>
          <Grip className="w-[9px]" />
          <Slot><Palette /></Slot>
          <Combo text="可视化默认值" className="ml-[1px] w-[137px]" />
          <Slot className="ml-[1px]"><TanCube /></Slot>
          <div className="ml-[2px] h-0 w-0 border-x-[4px] border-t-[5px] border-x-transparent border-t-[#222]" />
        </Bar>
      </div>

      {/* row 3 */}
      <div className="flex h-[28px] shrink-0">
        <Bar className="ml-[478px] w-[214px]">
          <Grip className="w-[5px]" />
          <Slot><VennL /></Slot>
          <Slot><VennR /></Slot>
          <Slot><Ball /></Slot>
          <Slot><Wedge /></Slot>
          <Slot><Undo /></Slot>
          <Slot><Undo flip /></Slot>
          <Slot><Blocks /></Slot>
          <Slot><Manager /></Slot>
        </Bar>
      </div>

      {/* module / model context bar */}
      <div className="flex h-[33px] shrink-0 items-center border-b border-[#8f8f8f] bg-gradient-to-b from-[#fafafa] to-[#ebebeb]">
        <span className="ml-[91px] w-[31px] shrink-0">模块:</span>
        <Combo text="可视化" spin className="w-[98px]" />
        <span className="ml-[14px] w-[32px] shrink-0">模型:</span>
        <Combo text="F:/abaqus lianxi/fangzhen/2DD-test/YR/Job-2.odb" spin className="w-[326px]" />
        <svg className="ml-auto" width="12" height="14" viewBox="0 0 12 14"><path d="M2 1l9 6-9 6z" fill="#1f5078" /></svg>
        <svg className="ml-[16px] mr-[11px]" width="18" height="14" viewBox="0 0 18 14"><path d="M0 1h3v12H0zM10 1v12L3 7zM18 1v12l-8-6z" fill="#1f5078" /></svg>
      </div>

      {/* main */}
      <div className="flex min-h-0 flex-1">
        <div className="flex w-[79px] shrink-0 flex-col border-r border-[#a0a0a0] bg-white">
          <div className="flex h-[33px] shrink-0 items-center gap-[8px] border-b border-[#c8c8c8] bg-[#fafafa] pl-[5px]">
            <Folder />
            <Tree />
            <Bulb />
          </div>
        </div>
        <div className="flex min-w-0 flex-1 flex-col">
          <div className="flex min-h-0 flex-1">
            <Toolbox />
            <div className="relative min-w-0 flex-1 overflow-hidden border-b border-l border-b-[#b0b0b0] border-l-[#8a8a8a] bg-white">
              <Legend />
              <ContourPlot />
              <AxisTriad />
              <div className="absolute right-0 top-[10px] w-[17px] overflow-hidden whitespace-nowrap text-[16px] leading-[20px] text-[#d8b070]">分</div>
              <div className="absolute right-0 top-[34px] text-[11px] leading-[14px] tracking-[2px] text-[#c88a3a]">? ?</div>
            </div>
          </div>
          <div className="h-[25px] shrink-0 bg-[#f0f0f0]" />
        </div>
      </div>
    </div>
  );
}
